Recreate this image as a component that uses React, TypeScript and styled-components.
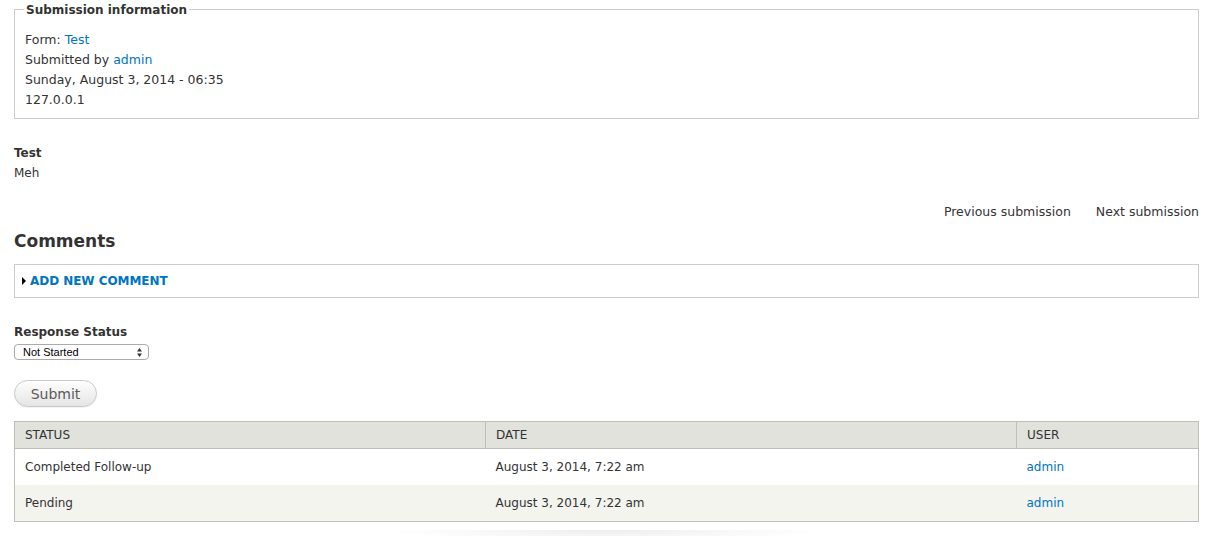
import React from 'react';
import styled, { createGlobalStyle } from 'styled-components';

const GlobalStyle = createGlobalStyle`
  body {
    margin: 0;
    background: #fff;
    color: #333;
    font-family: "DejaVu Sans", Verdana, sans-serif;
    font-size: 12px;
  }
`;

const Page = styled.div`
  padding: 0 10px 0 14px;
  width: 1185px;
`;

const Fieldset = styled.fieldset`
  margin: 9px 0 0;
  padding: 20px 10px 10px;
  border: 1px solid #ccc;
  height: 110px;
  box-sizing: border-box;
  font-size: 12.5px;
`;

const Legend = styled.legend`
  font-weight: bold;
  font-size: 12px;
  padding: 0 2px;
  margin-left: -1px;
  line-height: 0;
  height: 0;
`;

const Line = styled.div`
  line-height: 20px;
`;

const Link = styled.a`
  color: #0074bd;
  text-decoration: none;
`;

const Field = styled.div`
  margin-top: 24px;
`;

const Label = styled.div`
  font-weight: bold;
  line-height: 20px;
`;

const Pager = styled.div`
  display: flex;
  justify-content: flex-end;
  gap: 25px;
  margin-top: 19px;
  line-height: 20px;
  font-size: 12.5px;
`;

const Heading = styled.h2`
  margin: 7px 0 0;
  font-size: 17px;
  line-height: 24px;
  font-weight: bold;
  color: #333;
`;

const CommentBox = styled.div`
  margin-top: 11px;
  border: 1px solid #ccc;
  height: 34px;
  box-sizing: border-box;
  display: flex;
  align-items: center;
  padding-left: 7px;
  gap: 4px;
`;

const Triangle = styled.span`
  width: 0;
  height: 0;
  border-top: 4px solid transparent;
  border-bottom: 4px solid transparent;
  border-left: 4px solid #000;
`;

const Summary = styled.a`
  color: #0074bd;
  font-weight: bold;
  text-transform: uppercase;
  font-size: 12px;
  text-decoration: none;
  letter-spacing: -0.05px;
`;

const FormItem = styled.div`
  margin-top: 24px;
`;

const Select = styled.div`
  margin-top: 2px;
  width: 135px;
  height: 16px;
  box-sizing: border-box;
  border: 1px solid #aaa;
  border-radius: 4px;
  display: flex;
  align-items: center;
  justify-content: space-between;
  padding: 0 6px 0 8px;
  font-family: "Liberation Sans", Arial, sans-serif;
  font-size: 11px;
  color: #000;
  background: #fff;
`;

const Arrows = styled.svg`
  width: 5px;
  height: 9px;
`;

const Button = styled.button`
  margin-top: 20px;
  width: 83px;
  height: 27px;
  border: 1px solid #c9c9c9;
  border-radius: 14px;
  background: linear-gradient(#fefefe, #e5e5e5);
  color: #5a5a5a;
  font-family: "DejaVu Sans", Verdana, sans-serif;
  font-size: 14px;
  padding: 0;
  box-shadow: 0 1px 1px rgba(0, 0, 0, 0.05);
`;

const Table = styled.table`
  margin-top: 14px;
  width: 100%;
  border-collapse: collapse;
  border: 1px solid #bebfb9;
  table-layout: fixed;
`;

const Th = styled.th<{ $w?: string }>`
  width: ${p => p.$w || 'auto'};
  background: #e1e2dc;
  border: 1px solid #bebfb9;
  text-align: left;
  font-weight: normal;
  text-transform: uppercase;
  padding: 0 10px;
  height: 26px;
  color: #333;
`;

const Tr = styled.tr<{ $even?: boolean }>`
  background: ${p => (p.$even ? '#f3f4ee' : '#fff')};
`;

const Td = styled.td`
  padding: 0 10px;
  height: 36px;
`;

const Shadow = styled.div`
  margin: 8px auto 0;
  width: 440px;
  height: 12px;
  background: radial-gradient(ellipse at center top, rgba(0, 0, 0, 0.07), rgba(0, 0, 0, 0) 70%);
`;

const rows = [
  { status: 'Completed Follow-up', date: 'August 3, 2014, 7:22 am', user: 'admin' },
  { status: 'Pending', date: 'August 3, 2014, 7:22 am', user: 'admin' },
];

const App: React.FC = () => {
  return (
    <Page>
      <GlobalStyle />
      <Fieldset>
        <Legend>Submission information</Legend>
        <Line>Form: <Link href="#">Test</Link></Line>
        <Line>Submitted by <Link href="#">admin</Link></Line>
        <Line>Sunday, August 3, 2014 - 06:35</Line>
        <Line>127.0.0.1</Line>
      </Fieldset>

      <Field>
        <Label>Test</Label>
        <Line>Meh</Line>
      </Field>

      <Pager>
        <span>Previous submission</span>
        <span>Next submission</span>
      </Pager>

      <Heading>Comments</Heading>
      <CommentBox>
        <Triangle />
        <Summary href="#">Add new comment</Summary>
      </CommentBox>

      <FormItem>
        <Label>Response Status</Label>
        <Select>
          <span>Not Started</span>
          <Arrows viewBox="0 0 5 9">
            <path d="M0 3.5 L2.5 0 L5 3.5 Z M0 5.5 L2.5 9 L5 5.5 Z" fill="#333" />
          </Arrows>
        </Select>
      </FormItem>

      <Button>Submit</Button>

      <Table>
        <thead>
          <tr>
            <Th $w="450px">Status</Th>
            <Th $w="510px">Date</Th>
            <Th>User</Th>
          </tr>
        </thead>
        <tbody>
          {rows.map((r, i) => (
            <Tr key={i} $even={i % 2 === 1}>
              <Td>{r.status}</Td>
              <Td>{r.date}</Td>
              <Td><Link href="#">{r.user}</Link></Td>
            </Tr>
          ))}
        </tbody>
      </Table>
      <Shadow />
    </Page>
  );
};

export default App;
